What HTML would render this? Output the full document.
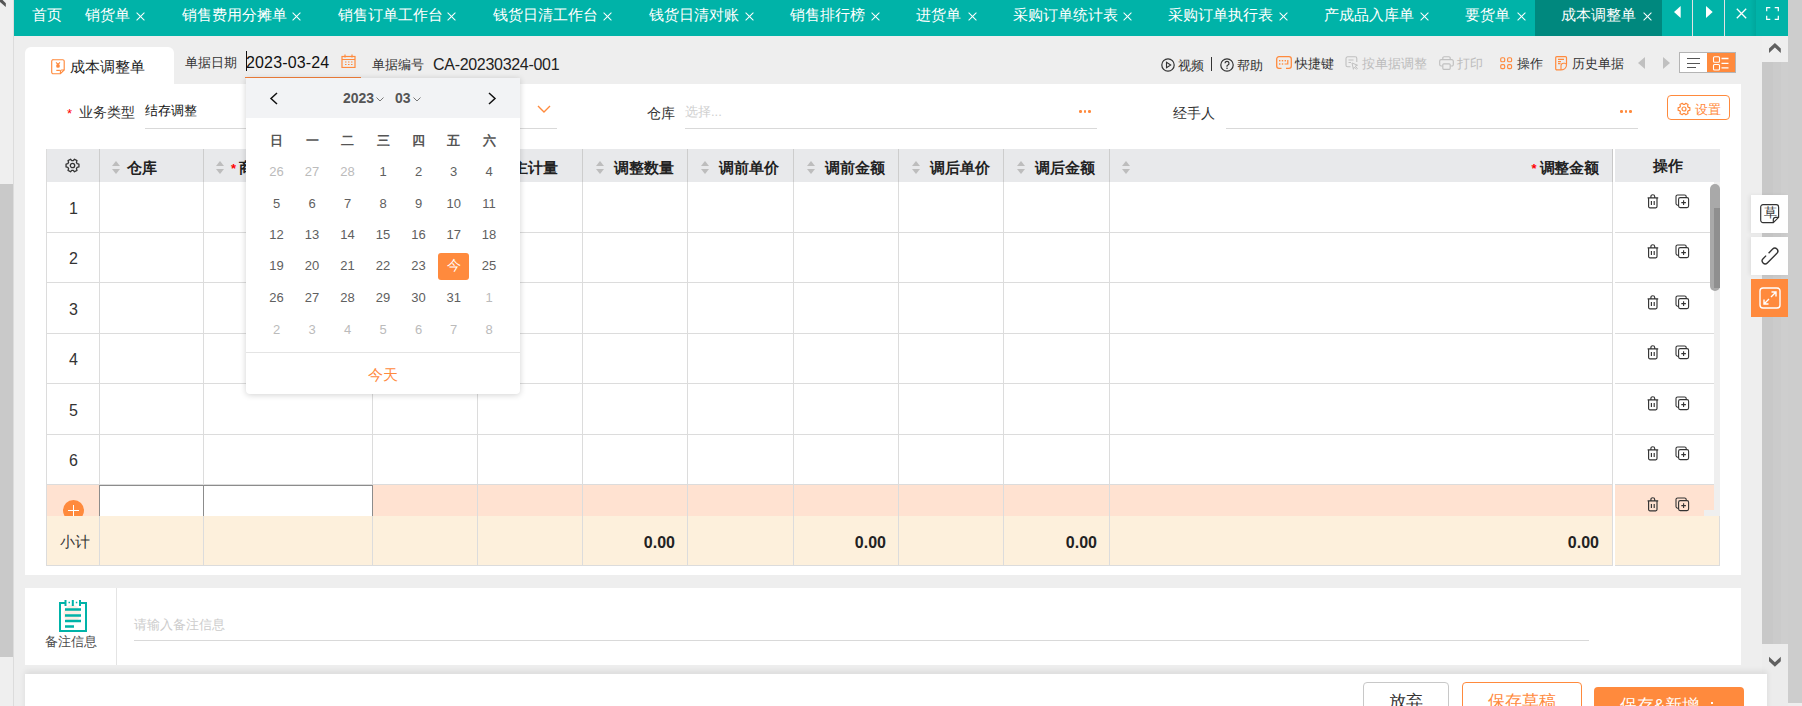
<!DOCTYPE html>
<html><head><meta charset="utf-8">
<style>
*{box-sizing:border-box;margin:0;padding:0}
html,body{width:1802px;height:706px;overflow:hidden;background:#eeeeee;font-family:"Liberation Sans",sans-serif;color:#333;position:relative}
.a{position:absolute}
.t{position:absolute;white-space:nowrap;line-height:1}
/* strips */
#lstrip{left:0;top:0;width:13px;height:706px;background:#efefef}
#lthumb{left:0;top:184px;width:13px;height:473px;background:#c9c9c9}
#lline{left:13px;top:0;width:1px;height:706px;background:#dcdcdc}
#rstrip{left:1788px;top:0;width:14px;height:703px;background:#cdcdcd}
#tabs{left:14px;top:0;width:1774px;height:36px;background:#00b3a8}
.tab{color:#fff;font-size:15px;top:7px}
.x{position:absolute;top:11.5px;width:9px;height:9px;margin-left:.5px}
.x:before,.x:after{content:"";position:absolute;left:4px;top:-1px;width:1px;height:11px;background:#fff;transform:rotate(45deg)}
.x:after{transform:rotate(-45deg)}
#active{left:1535px;top:0;width:127px;height:36px;background:#00887e}
/* vscroll */
#vsb{left:1762px;top:36px;width:26px;height:638px;background:linear-gradient(to right,#c8c8c8 0,#c8c8c8 11px,#cbcbcb 11px,#cbcbcb 19px,#cecece 19px)}
#vsbup{left:1762px;top:36px;width:26px;height:26px;background:#efefef}
#vsbdn{left:1762px;top:644px;width:26px;height:62px;background:#ececec}
/* card */
#card{left:25px;top:84px;width:1716px;height:491px;background:#fff}
#ctab{left:25px;top:47px;width:149px;height:40px;background:#fff;border-radius:6px 6px 0 0}
.lbl{font-size:13px;color:#333}
.ul{position:absolute;height:1px;background:#d9d9d9}
/* table */
#thead{left:46px;top:149px;width:1674px;height:33px;background:#e8e9eb}
.vl{position:absolute;width:1px;background:#dcdcdc}
.hl{position:absolute;height:1px;background:#dcdcdc}
.th{font-size:15px;font-weight:bold;color:#222;top:160px}
.sort{position:absolute;top:161px;width:8px;height:13px}
.sort:before{content:"";position:absolute;left:0;top:0;border-left:4px solid transparent;border-right:4px solid transparent;border-bottom:5px solid #bdbdbd}
.sort:after{content:"";position:absolute;left:0;bottom:0;border-left:4px solid transparent;border-right:4px solid transparent;border-top:5px solid #bdbdbd}
.idx{font-size:16px;color:#333}
.req{color:#f00}
/* calendar */
#cal{left:246px;top:78px;width:274px;height:316px;background:#fff;border-radius:0 0 4px 4px;box-shadow:0 1px 6px rgba(0,0,0,.18)}
#calh{left:0;top:0;width:274px;height:40px;background:#f2f3f5}
.wd{font-size:13px;font-weight:bold;color:#555;width:36px;text-align:center}
.dn{font-size:13px;color:#606060;width:36px;text-align:center}
.dn.g{color:#bbb}

/* card header */
.tb{font-size:13px;color:#333;top:57px}
.tb2{font-size:13px;color:#333;top:58.5px}
.tbd{font-size:13px;color:#bcbcbc;top:57px}
.ic{position:absolute}
#datein{left:246px;top:55px;font-size:16px;letter-spacing:.15px;color:#111}
#dateul{left:245px;top:77px;width:116px;height:1px;background:#f5803a}
#setbtn{left:1667px;top:95px;width:63px;height:25px;border:1px solid #ff8a3d;border-radius:4px;background:#fff}
.dots{position:absolute;width:13px;height:3px}
.dots i{position:absolute;top:.3px;width:2.6px;height:2.6px;border-radius:50%;background:#ff8a3d}
.ops{position:absolute}
#notes{left:25px;top:588px;width:1716px;height:77px;background:#fff}
#footer{left:25px;top:674px;width:1742px;height:40px;background:#fff;box-shadow:0 -3px 6px rgba(0,0,0,.08)}
.btn{position:absolute;top:682px;height:34px;border-radius:4px;font-size:17px;text-align:center;line-height:38px}
.side{position:absolute;left:1751px;width:37px;height:37px;background:#fff}
</style></head><body>
<div class="a" id="lstrip"></div><div class="a" id="lthumb"></div><div class="a" id="lline"></div>
<div class="a" id="rstrip"></div>
<div class="a" id="tabs"></div>
<div class="a" id="active"></div>
<div class="t tab" style="left:32px">首页</div>
<div class="t tab" style="left:85px">销货单</div><span class="x" style="left:135px"></span>
<div class="t tab" style="left:182px">销售费用分摊单</div><span class="x" style="left:291px"></span>
<div class="t tab" style="left:338px">销售订单工作台</div><span class="x" style="left:446px"></span>
<div class="t tab" style="left:493px">钱货日清工作台</div><span class="x" style="left:602px"></span>
<div class="t tab" style="left:649px">钱货日清对账</div><span class="x" style="left:744px"></span>
<div class="t tab" style="left:790px">销售排行榜</div><span class="x" style="left:870px"></span>
<div class="t tab" style="left:916px">进货单</div><span class="x" style="left:967px"></span>
<div class="t tab" style="left:1013px">采购订单统计表</div><span class="x" style="left:1122px"></span>
<div class="t tab" style="left:1168px">采购订单执行表</div><span class="x" style="left:1278px"></span>
<div class="t tab" style="left:1324px">产成品入库单</div><span class="x" style="left:1419px"></span>
<div class="t tab" style="left:1465px">要货单</div><span class="x" style="left:1516px"></span>
<div class="t tab" style="left:1561px">成本调整单</div><span class="x" style="left:1642px"></span>

<div class="a" id="vsb"></div><div class="a" id="vsbup"></div><div class="a" id="vsbdn"></div>

<div class="a" id="ctab"></div>
<div class="a" id="card"></div>


<!-- card header -->
<svg class="ic" style="left:51px;top:58.5px" width="15" height="16" viewBox="0 0 15 16"><path d="M2.3.7h9.4a1.5 1.5 0 0 1 1.5 1.5v8.7l-3.8 3.8H2.3A1.5 1.5 0 0 1 .7 13.2V2.2A1.5 1.5 0 0 1 2.3.7z" fill="none" stroke="#ff8a3d" stroke-width="1.15"/><path d="M9.4 14.5v-2.3a1.2 1.2 0 0 1 1.2-1.2h2.5" fill="none" stroke="#ff8a3d" stroke-width="1.1"/><path d="M5 3.4l2 2 2-2" fill="none" stroke="#ff8a3d" stroke-width="1.1"/><circle cx="7" cy="6.9" r="1.9" fill="#ff8a3d"/><path d="M5.3 11.4h3.6" stroke="#ff8a3d" stroke-width="1.2"/></svg>
<div class="t" style="left:69.5px;top:59px;font-size:15px;color:#222">成本调整单</div>
<div class="t lbl" style="left:185px;top:56px">单据日期</div>
<div class="t" id="datein">2023-03-24</div>
<div class="a" style="left:246px;top:51px;width:1px;height:20px;background:#111"></div>
<svg class="ic" style="left:341px;top:54px" width="15" height="14" viewBox="0 0 15 14"><rect x="1" y="2.5" width="13" height="11" fill="none" stroke="#ff8a3d" stroke-width="1.2"/><path d="M1 5.5h13M4 0.5v3M11 0.5v3" stroke="#ff8a3d" stroke-width="1.2"/><path d="M4 8h1.5M7 8h1.5M10 8h1.5M4 10.5h1.5M7 10.5h1.5M10 10.5h1.5" stroke="#ff8a3d" stroke-width="1.2"/></svg>
<div class="a" id="dateul"></div>
<div class="t lbl" style="left:372px;top:58px">单据编号</div>
<div class="t" style="left:433px;top:57px;font-size:16px;letter-spacing:-.3px;color:#222">CA-20230324-001</div>

<!-- toolbar -->
<svg class="ic" style="left:1160.5px;top:57.5px" width="14" height="14" viewBox="0 0 14 14"><circle cx="7" cy="7" r="6.2" fill="none" stroke="#333" stroke-width="1.2"/><path d="M5.5 4.2v5.6l4.2-2.8z" fill="none" stroke="#333" stroke-width="1.1"/></svg>
<div class="t tb2" style="left:1178px">视频</div>
<div class="a" style="left:1210.5px;top:57px;width:1.5px;height:14px;background:#333"></div>
<svg class="ic" style="left:1220px;top:57.5px" width="14" height="14" viewBox="0 0 14 14"><circle cx="7" cy="7" r="6.2" fill="none" stroke="#333" stroke-width="1.2"/><path d="M5 5.3a2 2 0 1 1 2.6 1.9c-.5.2-.6.5-.6 1v.6" fill="none" stroke="#333" stroke-width="1.2"/><circle cx="7" cy="10.3" r=".8" fill="#333"/></svg>
<div class="t tb2" style="left:1237px">帮助</div>
<svg class="ic" style="left:1275.5px;top:56px" width="16" height="13" viewBox="0 0 16 13"><path d="M5.5 12.3H3A2.3 2.3 0 0 1 .7 10V3A2.3 2.3 0 0 1 3 .7h10A2.3 2.3 0 0 1 15.3 3v7A2.3 2.3 0 0 1 13 12.3h-3" fill="none" stroke="#ff8a3d" stroke-width="1.3"/><g fill="#ff8a3d"><rect x="3" y="4" width="1.4" height="1.4"/><rect x="5.8" y="4" width="1.4" height="1.4"/><rect x="8.6" y="4" width="1.4" height="1.4"/><rect x="3" y="7.3" width="1.4" height="1.4"/><rect x="5.8" y="7.3" width="1.4" height="1.4"/></g><path d="M8.6 8h3.2V4" fill="none" stroke="#ff8a3d" stroke-width="1.2"/></svg>
<div class="t tb" style="left:1295px">快捷键</div>
<svg class="ic" style="left:1345px;top:56px" width="14" height="14" viewBox="0 0 14 14"><path d="M5.5 10.8H2.6A1.6 1.6 0 0 1 1 9.2V2.4A1.6 1.6 0 0 1 2.6.8h7.6a1.6 1.6 0 0 1 1.6 1.6V6" fill="none" stroke="#c0c0c0" stroke-width="1.1"/><path d="M3.5 4h5M3.5 6.5h2.5" stroke="#c0c0c0" stroke-width="1.1"/><path d="M7 7l5.5 2.2-2.3.9 2.2 2.3-.9.9-2.2-2.3-.9 2.3z" fill="none" stroke="#c0c0c0" stroke-width="1" stroke-linejoin="round"/></svg>
<div class="t tbd" style="left:1362px">按单据调整</div>
<svg class="ic" style="left:1438.5px;top:56px" width="15" height="14" viewBox="0 0 15 14"><path d="M3.8 3.6V2A1.3 1.3 0 0 1 5.1.7h4.8A1.3 1.3 0 0 1 11.2 2v1.6" fill="none" stroke="#c0c0c0" stroke-width="1.15"/><path d="M3.5 10H2.2A1.5 1.5 0 0 1 .7 8.5V5.1A1.5 1.5 0 0 1 2.2 3.6h10.6a1.5 1.5 0 0 1 1.5 1.5v3.4a1.5 1.5 0 0 1-1.5 1.5h-1.3" fill="none" stroke="#c0c0c0" stroke-width="1.15"/><rect x="3.8" y="7.8" width="7.4" height="5.5" rx="1" fill="none" stroke="#c0c0c0" stroke-width="1.15"/></svg>
<div class="t tbd" style="left:1457px">打印</div>
<svg class="ic" style="left:1500px;top:57px" width="13" height="13" viewBox="0 0 13 13"><g fill="none" stroke="#ff8a3d" stroke-width="1.15"><rect x="0.7" y="0.7" width="4" height="4" rx="1.3"/><rect x="7.6" y="0.7" width="4" height="4" rx="1.3"/><rect x="0.7" y="7.6" width="4" height="4" rx="1.3"/><rect x="7.6" y="7.6" width="4" height="4" rx="1.3"/></g></svg>
<div class="t tb" style="left:1517px">操作</div>
<svg class="ic" style="left:1555px;top:56px" width="13" height="15" viewBox="0 0 13 15"><path d="M6 13.8H1.8A1.1 1.1 0 0 1 .7 12.7V1.8A1.1 1.1 0 0 1 1.8.7h8.6A1.1 1.1 0 0 1 11.5 1.8V8.5" fill="none" stroke="#ff8a3d" stroke-width="1.2"/><path d="M6 13.8V9.8A2.6 2.6 0 0 1 8.6 7.2h1.2A1.8 1.8 0 0 1 11.5 9a4.8 4.8 0 0 1-5.5 4.8" fill="none" stroke="#ff8a3d" stroke-width="1.1"/><path d="M3 3.4h6M3 5.6h3M3 7.6h2.5" stroke="#ff8a3d" stroke-width="1.1"/></svg>
<div class="t tb" style="left:1572px">历史单据</div>
<svg class="ic" style="left:1638px;top:57px" width="8" height="12" viewBox="0 0 8 12"><path d="M7 0L0 6l7 6z" fill="#c0c0c0"/></svg>
<svg class="ic" style="left:1663px;top:57px" width="8" height="12" viewBox="0 0 8 12"><path d="M0 0l7 6-7 6z" fill="#c0c0c0"/></svg>
<div class="a" style="left:1679px;top:52px;width:57px;height:21px;border:1px solid #b4b4b4;background:#fff"></div>
<div class="a" style="left:1707px;top:53px;width:28px;height:19px;background:#ff8a3d"></div>
<svg class="ic" style="left:1686px;top:57px" width="16" height="12" viewBox="0 0 16 12"><path d="M1 1.5h13M1 6.5h13M1 10.5h9" stroke="#555" stroke-width="1"/></svg>
<svg class="ic" style="left:1712px;top:56px" width="18" height="15" viewBox="0 0 18 15"><g fill="none" stroke="#fff" stroke-width="1.1"><rect x="1.5" y="0.8" width="6" height="5.5" rx="1"/><rect x="1.5" y="8.5" width="6" height="5.5" rx="1"/></g><path d="M9.5 2.5h7M9.5 7.3h7M9.5 11.8h7" stroke="#fff" stroke-width="1.3"/></svg>

<!-- form row -->
<div class="t" style="left:67px;top:107px;font-size:13px;color:#f00">*</div>
<div class="t lbl" style="left:79px;top:104.5px;font-size:14px">业务类型</div>
<div class="t lbl" style="left:145px;top:104px;color:#111">结存调整</div>
<div class="ul" style="left:145px;top:128px;width:412px"></div>
<svg class="ic" style="left:537px;top:105px" width="14" height="9" viewBox="0 0 14 9"><path d="M1 1l6 6 6-6" fill="none" stroke="#ff8a3d" stroke-width="1.4"/></svg>
<div class="t lbl" style="left:647px;top:106.5px;font-size:13.5px">仓库</div>
<div class="t" style="left:685px;top:105px;font-size:13px;color:#d0d0d0">选择...</div>
<div class="ul" style="left:685px;top:128px;width:412px"></div>
<div class="dots" style="left:1079px;top:110px"><i style="left:0"></i><i style="left:4.5px"></i><i style="left:9px"></i></div>
<div class="t lbl" style="left:1173px;top:106.5px;font-size:13.5px">经手人</div>
<div class="ul" style="left:1226px;top:128px;width:412px"></div>
<div class="dots" style="left:1620px;top:110px"><i style="left:0"></i><i style="left:4.5px"></i><i style="left:9px"></i></div>
<div class="a" id="setbtn"></div>
<svg class="ic" style="left:1677px;top:102px" width="14" height="14" viewBox="0 0 14 14"><path d="M11.29 5.34 L12.86 5.69 L12.86 8.31 L11.29 8.66 L10.58 9.88 L11.06 11.42 L8.79 12.73 L7.70 11.55 L6.30 11.55 L5.21 12.73 L2.94 11.42 L3.42 9.88 L2.71 8.66 L1.14 8.31 L1.14 5.69 L2.71 5.34 L3.42 4.12 L2.94 2.58 L5.21 1.27 L6.30 2.45 L7.70 2.45 L8.79 1.27 L11.06 2.58 L10.58 4.12z" fill="none" stroke="#ff8a3d" stroke-width="1.2" stroke-linejoin="round"/><circle cx="7" cy="7" r="2" fill="none" stroke="#ff8a3d" stroke-width="1.2"/></svg>
<div class="t" style="left:1695px;top:102.7px;font-size:13px;color:#ff8a3d">设置</div>

<!-- table -->
<div class="a" id="thead"></div>
<div class="a" style="left:46px;top:485px;width:1668px;height:31px;background:#ffe2d1"></div>
<div class="a" style="left:46px;top:516px;width:1674px;height:50px;background:#fdf0dc"></div>
<div class="hl" style="left:46px;top:232px;width:1567px"></div>
<div class="hl" style="left:1615px;top:232px;width:99px"></div>
<div class="hl" style="left:46px;top:282px;width:1567px"></div>
<div class="hl" style="left:1615px;top:282px;width:99px"></div>
<div class="hl" style="left:46px;top:333px;width:1567px"></div>
<div class="hl" style="left:1615px;top:333px;width:99px"></div>
<div class="hl" style="left:46px;top:383px;width:1567px"></div>
<div class="hl" style="left:1615px;top:383px;width:99px"></div>
<div class="hl" style="left:46px;top:434px;width:1567px"></div>
<div class="hl" style="left:1615px;top:434px;width:99px"></div>
<div class="hl" style="left:46px;top:484px;width:1567px"></div>
<div class="hl" style="left:1615px;top:484px;width:99px"></div>
<div class="hl" style="left:46px;top:565px;width:1674px"></div>
<div class="vl" style="left:46px;top:149px;height:417px"></div>
<div class="vl" style="left:99px;top:149px;height:417px"></div>
<div class="vl" style="left:99px;top:149px;height:33px;background:#cdcdcd"></div>
<div class="vl" style="left:203px;top:149px;height:417px"></div>
<div class="vl" style="left:203px;top:149px;height:33px;background:#cdcdcd"></div>
<div class="vl" style="left:372px;top:149px;height:417px"></div>
<div class="vl" style="left:372px;top:149px;height:33px;background:#cdcdcd"></div>
<div class="vl" style="left:477px;top:149px;height:417px"></div>
<div class="vl" style="left:477px;top:149px;height:33px;background:#cdcdcd"></div>
<div class="vl" style="left:582px;top:149px;height:417px"></div>
<div class="vl" style="left:582px;top:149px;height:33px;background:#cdcdcd"></div>
<div class="vl" style="left:687px;top:149px;height:417px"></div>
<div class="vl" style="left:687px;top:149px;height:33px;background:#cdcdcd"></div>
<div class="vl" style="left:793px;top:149px;height:417px"></div>
<div class="vl" style="left:793px;top:149px;height:33px;background:#cdcdcd"></div>
<div class="vl" style="left:898px;top:149px;height:417px"></div>
<div class="vl" style="left:898px;top:149px;height:33px;background:#cdcdcd"></div>
<div class="vl" style="left:1003px;top:149px;height:417px"></div>
<div class="vl" style="left:1003px;top:149px;height:33px;background:#cdcdcd"></div>
<div class="vl" style="left:1109px;top:149px;height:417px"></div>
<div class="vl" style="left:1109px;top:149px;height:33px;background:#cdcdcd"></div>
<div class="vl" style="left:1612px;top:149px;height:417px"></div>
<div class="vl" style="left:1612px;top:149px;height:33px;background:#cdcdcd"></div>
<div class="a" style="left:1613px;top:149px;width:2px;height:417px;background:#fff"></div>
<div class="vl" style="left:1612px;top:149px;height:33px;background:#c8c8c8"></div>
<div class="vl" style="left:1719px;top:516px;height:50px"></div>
<div class="a" style="left:99px;top:485px;width:105px;height:31px;background:#fff;border:1px solid #8c8c8c;border-bottom:none"></div>
<div class="a" style="left:203px;top:485px;width:170px;height:31px;background:#fff;border:1px solid #8c8c8c;border-bottom:none"></div>
<div class="a" style="left:63px;top:500px;width:22px;height:16px;overflow:hidden"><div class="a" style="left:0;top:0;width:21px;height:21px;border-radius:50%;background:#ff8a3d"></div><div class="a" style="left:10px;top:5px;width:1px;height:11px;background:#fff"></div><div class="a" style="left:5px;top:10px;width:11px;height:1px;background:#fff"></div></div>
<svg class="ic" style="left:65px;top:158px" width="15" height="15" viewBox="0 0 15 15"><path d="M12.16 5.69 L13.94 6.06 L13.94 8.94 L12.16 9.31 L11.40 10.63 L11.97 12.36 L9.47 13.80 L8.27 12.44 L6.73 12.44 L5.53 13.80 L3.03 12.36 L3.60 10.63 L2.84 9.31 L1.06 8.94 L1.06 6.06 L2.84 5.69 L3.60 4.37 L3.03 2.64 L5.53 1.20 L6.73 2.56 L8.27 2.56 L9.47 1.20 L11.97 2.64 L11.40 4.37z" fill="none" stroke="#333" stroke-width="1.3" stroke-linejoin="round"/><circle cx="7.5" cy="7.5" r="2.2" fill="none" stroke="#333" stroke-width="1.3"/></svg>
<span class="sort" style="left:112px"></span>
<div class="t th" style="left:127px">仓库</div>
<span class="sort" style="left:216px"></span>
<div class="t req" style="left:231px;top:162px;font-size:13px;font-weight:bold">*</div>
<div class="t th" style="left:239px">商品</div>
<span class="sort" style="left:490px"></span>
<div class="t req" style="left:505px;top:162px;font-size:13px;font-weight:bold">*</div>
<div class="t th" style="left:513px">主计量</div>
<span class="sort" style="left:596px"></span>
<div class="t th" style="left:614px">调整数量</div>
<span class="sort" style="left:701px"></span>
<div class="t th" style="left:719px">调前单价</div>
<span class="sort" style="left:807px"></span>
<div class="t th" style="left:825px">调前金额</div>
<span class="sort" style="left:912px"></span>
<div class="t th" style="left:930px">调后单价</div>
<span class="sort" style="left:1017px"></span>
<div class="t th" style="left:1035px">调后金额</div>
<span class="sort" style="left:1122px"></span>
<div class="t req" style="left:1531.5px;top:162px;font-size:13px;font-weight:bold">*</div>
<div class="t th" style="left:1539.5px;letter-spacing:-.3px">调整金额</div>
<div class="t th" style="left:1653px;top:158px">操作</div>
<div class="t idx" style="left:69px;top:200.5px">1</div>
<div class="t idx" style="left:69px;top:250.5px">2</div>
<div class="t idx" style="left:69px;top:301.5px">3</div>
<div class="t idx" style="left:69px;top:351.5px">4</div>
<div class="t idx" style="left:69px;top:402.5px">5</div>
<div class="t idx" style="left:69px;top:452.5px">6</div>
<div class="t" style="left:60px;top:534px;font-size:15px;color:#333">小计</div>
<div class="t" style="left:635px;width:40px;text-align:right;top:535px;font-size:16px;font-weight:bold;color:#222">0.00</div>
<div class="t" style="left:846px;width:40px;text-align:right;top:535px;font-size:16px;font-weight:bold;color:#222">0.00</div>
<div class="t" style="left:1057px;width:40px;text-align:right;top:535px;font-size:16px;font-weight:bold;color:#222">0.00</div>
<div class="t" style="left:1559px;width:40px;text-align:right;top:535px;font-size:16px;font-weight:bold;color:#222">0.00</div>
<svg class="ic" style="left:1647px;top:194px" width="12" height="15" viewBox="0 0 12 15"><path d="M3.9 3.6V2.6a1.9 1.9 0 0 1 3.8 0v1M.6 3.8h10.6M1.6 4v8.6a1.2 1.2 0 0 0 1.2 1.2h6a1.2 1.2 0 0 0 1.2-1.2V4M4.4 7v4M7.2 7v4" fill="none" stroke="#333" stroke-width="1.15"/></svg>
<svg class="ic" style="left:1675px;top:194px" width="15" height="15" viewBox="0 0 15 15"><path d="M3.6 11.2H2.6A1.6 1.6 0 0 1 1 9.6V2.6A1.6 1.6 0 0 1 2.6 1h7a1.6 1.6 0 0 1 1.6 1.6v1" fill="none" stroke="#333" stroke-width="1.1"/><rect x="3.6" y="3.6" width="10" height="10" rx="1.6" fill="none" stroke="#333" stroke-width="1.1"/><path d="M8.6 6.3v4.6M6.3 8.6h4.6" stroke="#333" stroke-width="1.1"/></svg>
<svg class="ic" style="left:1647px;top:244px" width="12" height="15" viewBox="0 0 12 15"><path d="M3.9 3.6V2.6a1.9 1.9 0 0 1 3.8 0v1M.6 3.8h10.6M1.6 4v8.6a1.2 1.2 0 0 0 1.2 1.2h6a1.2 1.2 0 0 0 1.2-1.2V4M4.4 7v4M7.2 7v4" fill="none" stroke="#333" stroke-width="1.15"/></svg>
<svg class="ic" style="left:1675px;top:244px" width="15" height="15" viewBox="0 0 15 15"><path d="M3.6 11.2H2.6A1.6 1.6 0 0 1 1 9.6V2.6A1.6 1.6 0 0 1 2.6 1h7a1.6 1.6 0 0 1 1.6 1.6v1" fill="none" stroke="#333" stroke-width="1.1"/><rect x="3.6" y="3.6" width="10" height="10" rx="1.6" fill="none" stroke="#333" stroke-width="1.1"/><path d="M8.6 6.3v4.6M6.3 8.6h4.6" stroke="#333" stroke-width="1.1"/></svg>
<svg class="ic" style="left:1647px;top:295px" width="12" height="15" viewBox="0 0 12 15"><path d="M3.9 3.6V2.6a1.9 1.9 0 0 1 3.8 0v1M.6 3.8h10.6M1.6 4v8.6a1.2 1.2 0 0 0 1.2 1.2h6a1.2 1.2 0 0 0 1.2-1.2V4M4.4 7v4M7.2 7v4" fill="none" stroke="#333" stroke-width="1.15"/></svg>
<svg class="ic" style="left:1675px;top:295px" width="15" height="15" viewBox="0 0 15 15"><path d="M3.6 11.2H2.6A1.6 1.6 0 0 1 1 9.6V2.6A1.6 1.6 0 0 1 2.6 1h7a1.6 1.6 0 0 1 1.6 1.6v1" fill="none" stroke="#333" stroke-width="1.1"/><rect x="3.6" y="3.6" width="10" height="10" rx="1.6" fill="none" stroke="#333" stroke-width="1.1"/><path d="M8.6 6.3v4.6M6.3 8.6h4.6" stroke="#333" stroke-width="1.1"/></svg>
<svg class="ic" style="left:1647px;top:345px" width="12" height="15" viewBox="0 0 12 15"><path d="M3.9 3.6V2.6a1.9 1.9 0 0 1 3.8 0v1M.6 3.8h10.6M1.6 4v8.6a1.2 1.2 0 0 0 1.2 1.2h6a1.2 1.2 0 0 0 1.2-1.2V4M4.4 7v4M7.2 7v4" fill="none" stroke="#333" stroke-width="1.15"/></svg>
<svg class="ic" style="left:1675px;top:345px" width="15" height="15" viewBox="0 0 15 15"><path d="M3.6 11.2H2.6A1.6 1.6 0 0 1 1 9.6V2.6A1.6 1.6 0 0 1 2.6 1h7a1.6 1.6 0 0 1 1.6 1.6v1" fill="none" stroke="#333" stroke-width="1.1"/><rect x="3.6" y="3.6" width="10" height="10" rx="1.6" fill="none" stroke="#333" stroke-width="1.1"/><path d="M8.6 6.3v4.6M6.3 8.6h4.6" stroke="#333" stroke-width="1.1"/></svg>
<svg class="ic" style="left:1647px;top:396px" width="12" height="15" viewBox="0 0 12 15"><path d="M3.9 3.6V2.6a1.9 1.9 0 0 1 3.8 0v1M.6 3.8h10.6M1.6 4v8.6a1.2 1.2 0 0 0 1.2 1.2h6a1.2 1.2 0 0 0 1.2-1.2V4M4.4 7v4M7.2 7v4" fill="none" stroke="#333" stroke-width="1.15"/></svg>
<svg class="ic" style="left:1675px;top:396px" width="15" height="15" viewBox="0 0 15 15"><path d="M3.6 11.2H2.6A1.6 1.6 0 0 1 1 9.6V2.6A1.6 1.6 0 0 1 2.6 1h7a1.6 1.6 0 0 1 1.6 1.6v1" fill="none" stroke="#333" stroke-width="1.1"/><rect x="3.6" y="3.6" width="10" height="10" rx="1.6" fill="none" stroke="#333" stroke-width="1.1"/><path d="M8.6 6.3v4.6M6.3 8.6h4.6" stroke="#333" stroke-width="1.1"/></svg>
<svg class="ic" style="left:1647px;top:446px" width="12" height="15" viewBox="0 0 12 15"><path d="M3.9 3.6V2.6a1.9 1.9 0 0 1 3.8 0v1M.6 3.8h10.6M1.6 4v8.6a1.2 1.2 0 0 0 1.2 1.2h6a1.2 1.2 0 0 0 1.2-1.2V4M4.4 7v4M7.2 7v4" fill="none" stroke="#333" stroke-width="1.15"/></svg>
<svg class="ic" style="left:1675px;top:446px" width="15" height="15" viewBox="0 0 15 15"><path d="M3.6 11.2H2.6A1.6 1.6 0 0 1 1 9.6V2.6A1.6 1.6 0 0 1 2.6 1h7a1.6 1.6 0 0 1 1.6 1.6v1" fill="none" stroke="#333" stroke-width="1.1"/><rect x="3.6" y="3.6" width="10" height="10" rx="1.6" fill="none" stroke="#333" stroke-width="1.1"/><path d="M8.6 6.3v4.6M6.3 8.6h4.6" stroke="#333" stroke-width="1.1"/></svg>
<svg class="ic" style="left:1647px;top:496.5px" width="12" height="15" viewBox="0 0 12 15"><path d="M3.9 3.6V2.6a1.9 1.9 0 0 1 3.8 0v1M.6 3.8h10.6M1.6 4v8.6a1.2 1.2 0 0 0 1.2 1.2h6a1.2 1.2 0 0 0 1.2-1.2V4M4.4 7v4M7.2 7v4" fill="none" stroke="#333" stroke-width="1.15"/></svg>
<svg class="ic" style="left:1675px;top:496.5px" width="15" height="15" viewBox="0 0 15 15"><path d="M3.6 11.2H2.6A1.6 1.6 0 0 1 1 9.6V2.6A1.6 1.6 0 0 1 2.6 1h7a1.6 1.6 0 0 1 1.6 1.6v1" fill="none" stroke="#333" stroke-width="1.1"/><rect x="3.6" y="3.6" width="10" height="10" rx="1.6" fill="none" stroke="#333" stroke-width="1.1"/><path d="M8.6 6.3v4.6M6.3 8.6h4.6" stroke="#333" stroke-width="1.1"/></svg>
<div class="a" style="left:1714px;top:182px;width:6px;height:334px;background:#efefef"></div>
<div class="a" style="left:1704px;top:510px;width:10px;height:6px;background:#efefef"></div>
<div class="a" style="left:1710px;top:184px;width:10px;height:107px;border-radius:5px;background:#a9a9a9"></div>
<div class="a" style="left:1714px;top:208px;width:6px;height:80px;background:#8f8f8f"></div>
<!-- calendar -->
<div class="a" id="cal">
  <div class="a" id="calh"></div>
<svg class="ic" style="left:23px;top:14px" width="9" height="13" viewBox="0 0 9 13"><path d="M8 1L2 6.5 8 12" fill="none" stroke="#111" stroke-width="1.5"/></svg>
<svg class="ic" style="left:242px;top:14px" width="9" height="13" viewBox="0 0 9 13"><path d="M1 1l6 5.5L1 12" fill="none" stroke="#111" stroke-width="1.5"/></svg>
<div class="t" style="left:97px;top:13px;font-size:14px;font-weight:bold;color:#555">2023</div>
<svg class="ic" style="left:130px;top:19px" width="8" height="5" viewBox="0 0 8 5"><path d="M0.5 0.5l3.5 3.5 3.5-3.5" fill="none" stroke="#777" stroke-width="1"/></svg>
<div class="t" style="left:149px;top:13px;font-size:14px;font-weight:bold;color:#555">03</div>
<svg class="ic" style="left:167px;top:19px" width="8" height="5" viewBox="0 0 8 5"><path d="M0.5 0.5l3.5 3.5 3.5-3.5" fill="none" stroke="#777" stroke-width="1"/></svg>
<div class="t wd" style="left:12.5px;top:55.5px">日</div>
<div class="t wd" style="left:48px;top:55.5px">一</div>
<div class="t wd" style="left:83.5px;top:55.5px">二</div>
<div class="t wd" style="left:119px;top:55.5px">三</div>
<div class="t wd" style="left:154.5px;top:55.5px">四</div>
<div class="t wd" style="left:189.7px;top:55.5px">五</div>
<div class="t wd" style="left:225px;top:55.5px">六</div>
<div class="t dn g" style="left:12.5px;top:87.0px">26</div>
<div class="t dn g" style="left:48px;top:87.0px">27</div>
<div class="t dn g" style="left:83.5px;top:87.0px">28</div>
<div class="t dn" style="left:119px;top:87.0px">1</div>
<div class="t dn" style="left:154.5px;top:87.0px">2</div>
<div class="t dn" style="left:189.7px;top:87.0px">3</div>
<div class="t dn" style="left:225px;top:87.0px">4</div>
<div class="t dn" style="left:12.5px;top:118.5px">5</div>
<div class="t dn" style="left:48px;top:118.5px">6</div>
<div class="t dn" style="left:83.5px;top:118.5px">7</div>
<div class="t dn" style="left:119px;top:118.5px">8</div>
<div class="t dn" style="left:154.5px;top:118.5px">9</div>
<div class="t dn" style="left:189.7px;top:118.5px">10</div>
<div class="t dn" style="left:225px;top:118.5px">11</div>
<div class="t dn" style="left:12.5px;top:150.0px">12</div>
<div class="t dn" style="left:48px;top:150.0px">13</div>
<div class="t dn" style="left:83.5px;top:150.0px">14</div>
<div class="t dn" style="left:119px;top:150.0px">15</div>
<div class="t dn" style="left:154.5px;top:150.0px">16</div>
<div class="t dn" style="left:189.7px;top:150.0px">17</div>
<div class="t dn" style="left:225px;top:150.0px">18</div>
<div class="t dn" style="left:12.5px;top:181.0px">19</div>
<div class="t dn" style="left:48px;top:181.0px">20</div>
<div class="t dn" style="left:83.5px;top:181.0px">21</div>
<div class="t dn" style="left:119px;top:181.0px">22</div>
<div class="t dn" style="left:154.5px;top:181.0px">23</div>
<div class="a" style="left:192px;top:175px;width:31px;height:27px;border-radius:3px;background:#ff8a3d"></div>
<div class="t" style="left:189.7px;width:36px;text-align:center;top:180.0px;font-size:14px;color:#fff">今</div>
<div class="t dn" style="left:225px;top:181.0px">25</div>
<div class="t dn" style="left:12.5px;top:213.0px">26</div>
<div class="t dn" style="left:48px;top:213.0px">27</div>
<div class="t dn" style="left:83.5px;top:213.0px">28</div>
<div class="t dn" style="left:119px;top:213.0px">29</div>
<div class="t dn" style="left:154.5px;top:213.0px">30</div>
<div class="t dn" style="left:189.7px;top:213.0px">31</div>
<div class="t dn g" style="left:225px;top:213.0px">1</div>
<div class="t dn g" style="left:12.5px;top:245.0px">2</div>
<div class="t dn g" style="left:48px;top:245.0px">3</div>
<div class="t dn g" style="left:83.5px;top:245.0px">4</div>
<div class="t dn g" style="left:119px;top:245.0px">5</div>
<div class="t dn g" style="left:154.5px;top:245.0px">6</div>
<div class="t dn g" style="left:189.7px;top:245.0px">7</div>
<div class="t dn g" style="left:225px;top:245.0px">8</div>
<div class="a" style="left:0;top:274px;width:274px;height:1px;background:#e4e4e4"></div>
<div class="t" style="left:122px;top:289px;font-size:15px;color:#ff8a3d">今天</div>
</div>

<div class="a" id="notes"></div>
<div class="a" style="left:116px;top:588px;width:1px;height:77px;background:#e4e4e4"></div>
<svg class="ic" style="left:59px;top:600px" width="28" height="32" viewBox="0 0 28 32"><circle cx="13" cy="13.5" r="8.5" fill="#fdeee4"/><path d="M6 3H1v28h26V3h-5" fill="none" stroke="#00b3a8" stroke-width="2"/><path d="M6.5 0v6M13.8 0v6M21 0v6" stroke="#00b3a8" stroke-width="2"/><path d="M9.5 2.5h1.5M16.8 2.5h1.5" stroke="#00b3a8" stroke-width="1.5"/><path d="M6 9.5h16M6 15.5h16M6 21h16M6 26.5h9" stroke="#00b3a8" stroke-width="2.4"/></svg>
<div class="t" style="left:45px;top:635px;font-size:13px;color:#4a4a4a">备注信息</div>
<div class="t" style="left:134px;top:618px;font-size:13px;color:#ccc">请输入备注信息</div>
<div class="ul" style="left:134px;top:640px;width:1455px"></div>
<div class="a" id="footer"></div>
<div class="btn" style="left:1363px;width:86px;border:1px solid #c8c8c8;background:#fff;color:#333">放弃</div>
<div class="btn" style="left:1462px;width:120px;border:1px solid #ff8a3d;background:#fff;color:#ff8a3d">保存草稿</div>
<div class="btn" style="left:1594px;top:687px;width:150px;background:#ff8a3d;color:#fff"></div><div class="t" style="left:1619.5px;top:697px;font-size:17px;color:#fff">保存&amp;新增</div><div class="a" style="left:1711px;top:702px;width:2px;height:2px;background:#fff"></div>
<div class="side" style="top:195px;height:38px;box-shadow:-2px 0 4px rgba(0,0,0,.06)"></div>
<svg class="ic" style="left:1760px;top:204px" width="20" height="20" viewBox="0 0 20 20"><path d="M3 .7h13.3a2.3 2.3 0 0 1 2.3 2.3v10.3l-5.3 5.3H3A2.3 2.3 0 0 1 .7 16.3V3A2.3 2.3 0 0 1 3 .7z" fill="none" stroke="#333" stroke-width="1.2"/><path d="M13.3 18.6v-3a2.3 2.3 0 0 1 2.3-2.3h3" fill="none" stroke="#333" stroke-width="1.2"/></svg>
<div class="t" style="left:1763.5px;top:207px;font-size:12.5px;color:#333">草</div>
<div class="side" style="top:237px;height:38px;box-shadow:-2px 0 4px rgba(0,0,0,.06)"></div>
<svg class="ic" style="left:1760px;top:246px;overflow:visible" width="20" height="20" viewBox="0 0 20 20"><path d="M7 12.5V16.8a3 3 0 0 0 6 0V3.2a3 3 0 0 0-6 0V9" fill="none" stroke="#333" stroke-width="1.35" transform="rotate(45 10 10)"/></svg>
<div class="side" style="top:279px;height:38px;background:#ff8a3d"></div>
<svg class="ic" style="left:1759px;top:287px" width="22" height="22" viewBox="0 0 22 22"><rect x="1" y="1" width="20" height="20" rx="3" fill="none" stroke="#fff" stroke-width="1.4"/><path d="M12 10L17 5M12.5 5H17v4.5M10 12L5 17M5 12.5V17h4.5" fill="none" stroke="#fff" stroke-width="1.4"/></svg>
<!-- tab buttons -->
<div class="a" style="left:1692px;top:0;width:1px;height:36px;background:#e2e2e2"></div>
<div class="a" style="left:1724px;top:0;width:1px;height:36px;background:#e2e2e2"></div>
<div class="a" style="left:1750px;top:0;width:6px;height:36px;background:linear-gradient(to right,rgba(0,0,0,0),rgba(0,0,0,.07))"></div>
<svg class="ic" style="left:1673.5px;top:6px" width="7" height="12" viewBox="0 0 7 12"><path d="M6.7 0L0 6l6.7 6z" fill="#fff"/></svg>
<svg class="ic" style="left:1705.5px;top:6px" width="7" height="12" viewBox="0 0 7 12"><path d="M0 0l6.7 6L0 12z" fill="#fff"/></svg>
<svg class="ic" style="left:1735.5px;top:7.5px" width="11" height="11" viewBox="0 0 11 11"><path d="M.8.8l9.4 9.4M10.2.8L.8 10.2" stroke="#fff" stroke-width="1.3"/></svg>
<svg class="ic" style="left:1765.5px;top:6.5px" width="13" height="13" viewBox="0 0 13 13"><path d="M.7 4.3V.7h3.6M8.7.7h3.6v3.6M12.3 8.7v3.6H8.7M4.3 12.3H.7V8.7" fill="none" stroke="#fff" stroke-width="1.2"/></svg>
<!-- scroll arrows -->
<svg class="ic" style="left:1768px;top:42px" width="14" height="12" viewBox="0 0 14 12"><path d="M1 6.5L6.9 1l5.9 5.5V11L6.9 5.5 1 11z" fill="#606060"/></svg>
<svg class="ic" style="left:1768px;top:655px" width="14" height="13" viewBox="0 0 14 13"><path d="M1 1.8l5.9 5.5 5.9-5.5v4.5L6.9 11.8 1 6.3z" fill="#606060"/></svg>
<svg class="ic" style="left:0;top:0" width="8" height="8" viewBox="0 0 8 8"><path d="M0 0H2.6L5.8 3.3V6.9L0 1.9z" fill="#555"/></svg>
</body></html>
